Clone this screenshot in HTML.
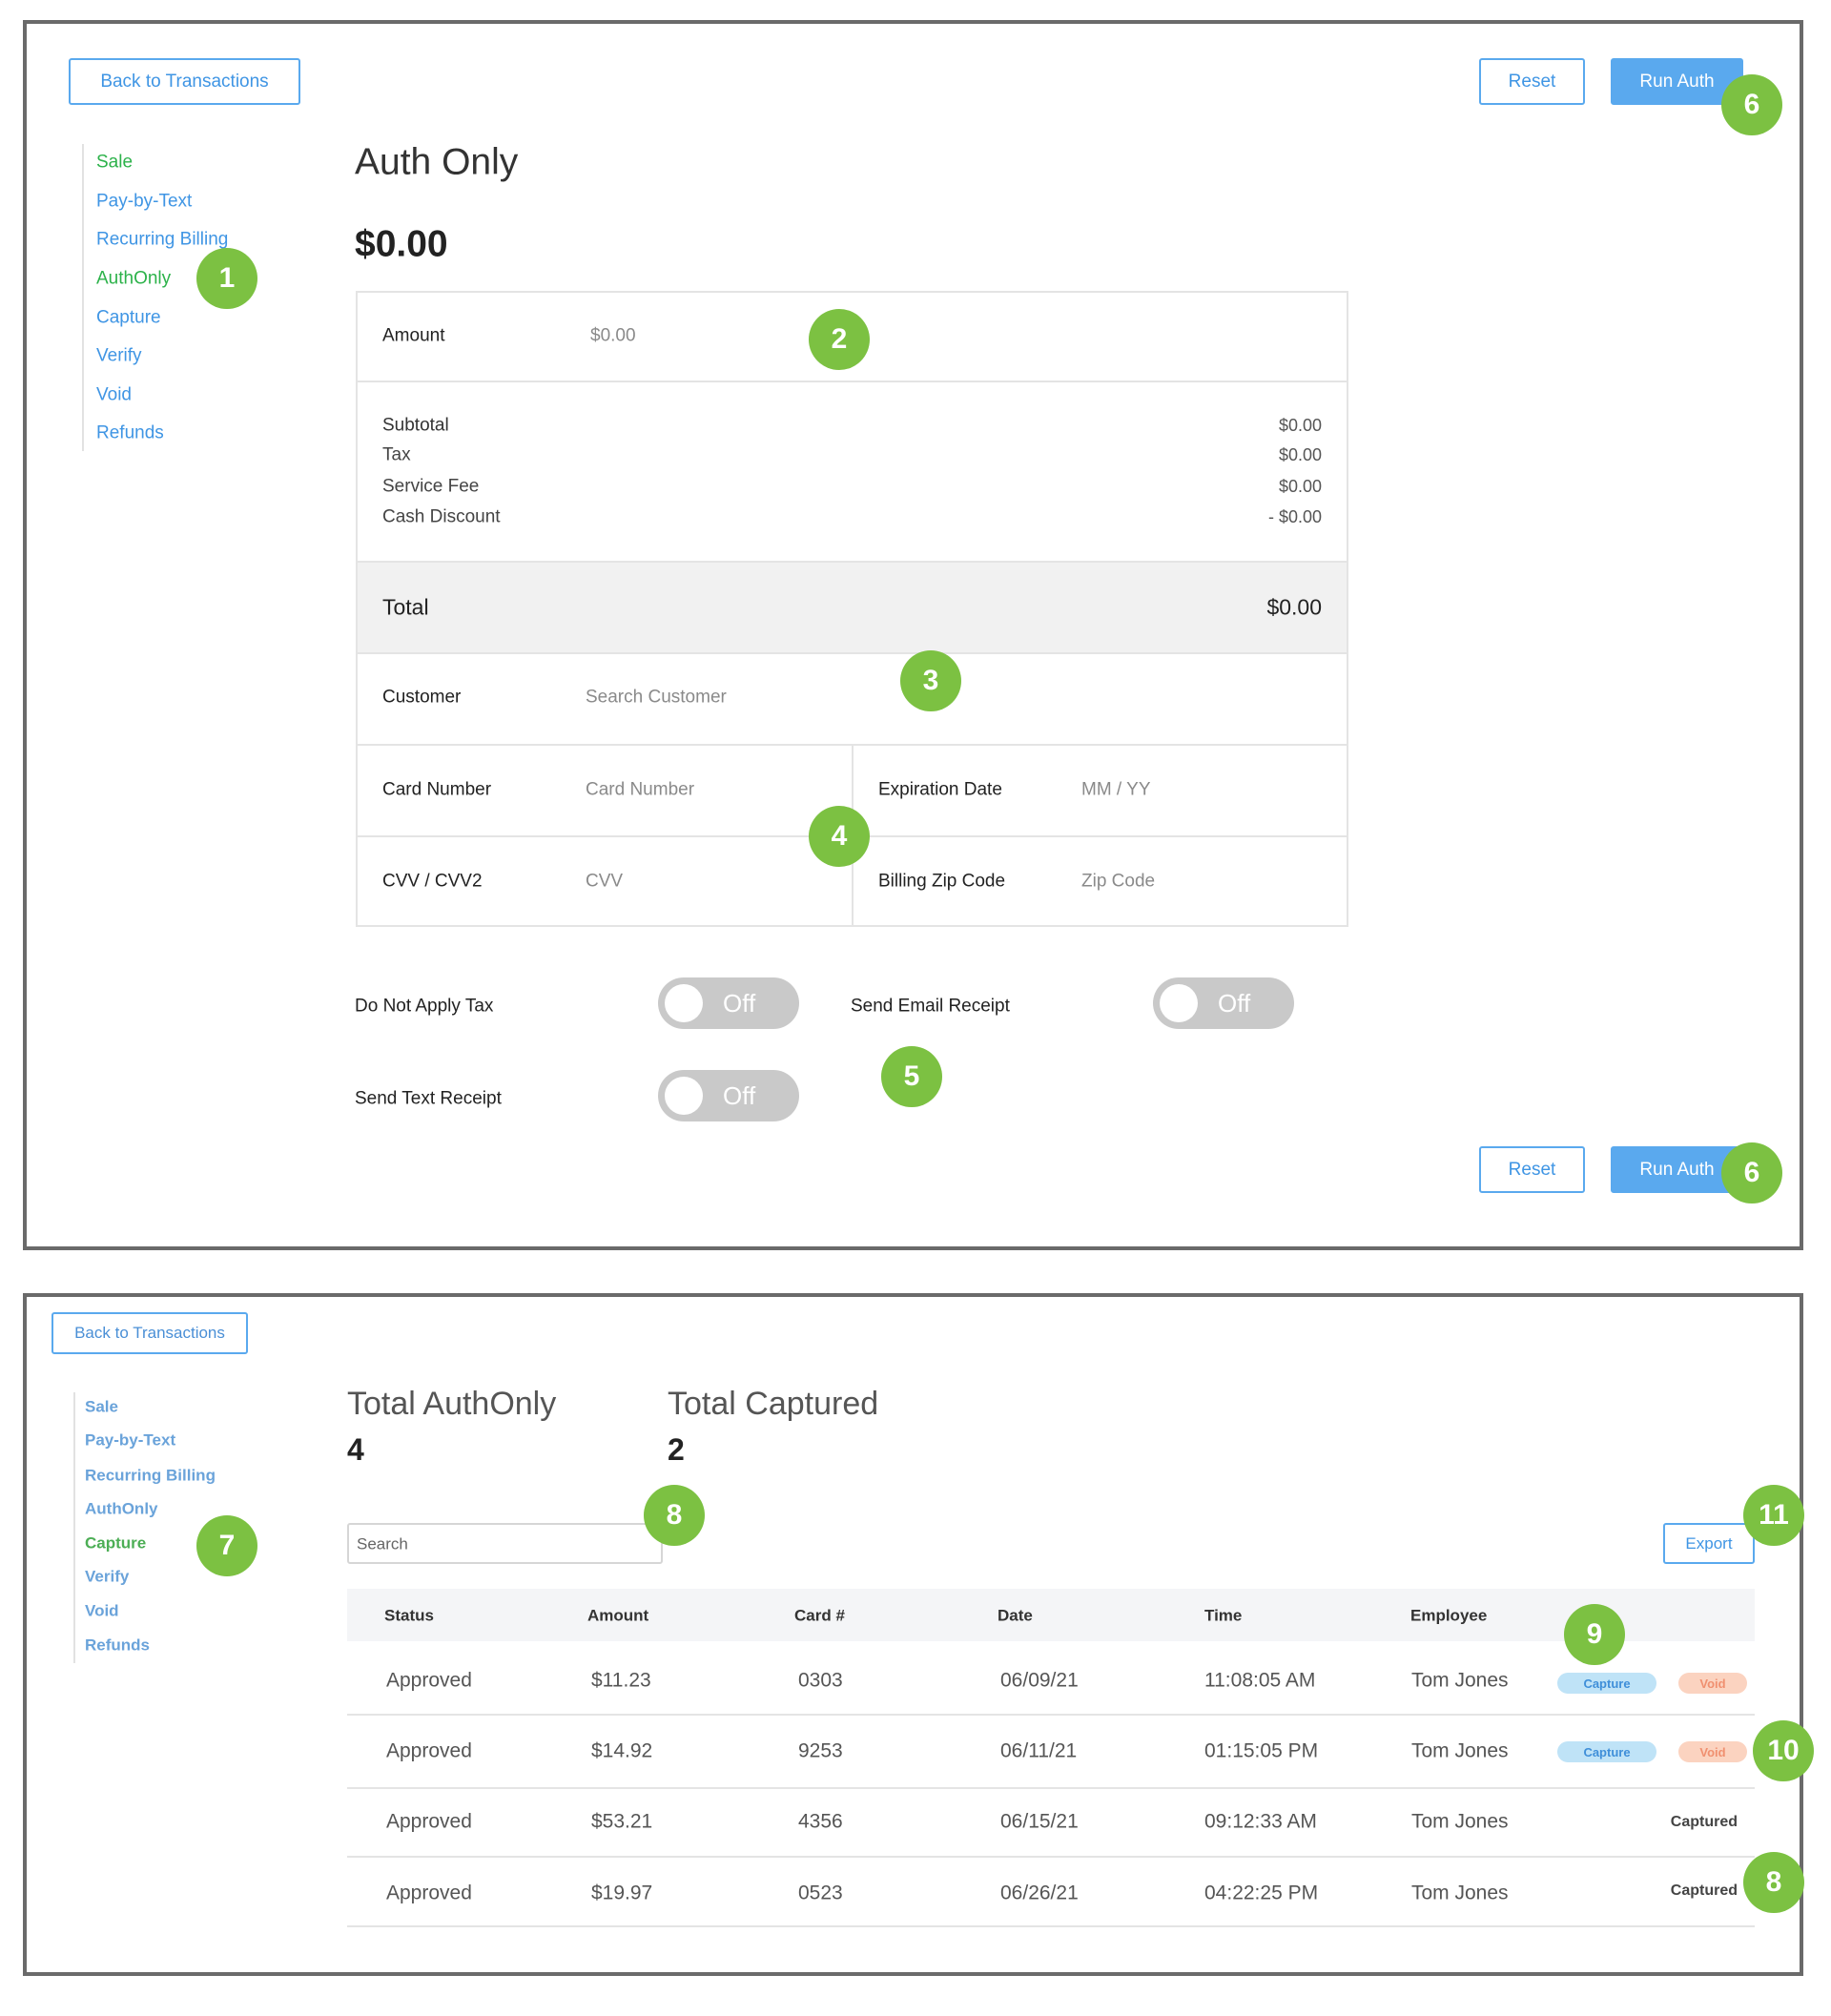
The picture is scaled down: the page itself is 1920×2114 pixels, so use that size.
<!DOCTYPE html>
<html><head><meta charset="utf-8"><style>
body{margin:0;width:1920px;height:2114px;background:#fff;position:relative;overflow:hidden;font-family:"Liberation Sans",Arial,sans-serif}
.a{position:absolute}
.t{position:absolute;white-space:nowrap;transform:translateY(-50%);line-height:1}
.frame{position:absolute;border:4px solid #6a6a6a;box-sizing:border-box}
.btn{position:absolute;box-sizing:border-box;border:2px solid #5aa9ee;border-radius:3px;color:#3f95e4;display:flex;align-items:center;justify-content:center;background:#fff}
.run{background:#5aa9ee;color:#fff;border-color:#5aa9ee}
.bd{position:absolute;width:64px;height:64px;border-radius:50%;background:#7cc142;color:#fff;font-weight:bold;font-size:30px;display:flex;align-items:center;justify-content:center;transform:translate(-50%,-50%)}
.nav1{color:#3f95e4;font-size:19px}
.g{color:#2cb24a}
.lab{color:#222;font-size:19px}
.ph{color:#8a8a8a;font-size:19px}
.hl{position:absolute;height:2px;background:#e4e4e4}
.tog{position:absolute;width:148px;height:54px;border-radius:27px;background:#c9c9c9;box-sizing:border-box}
.tog i{position:absolute;left:7px;top:7px;width:40px;height:40px;border-radius:50%;background:#fff}
.tog b{position:absolute;left:68px;top:12px;color:#fff;font-size:26px;font-weight:normal}
.nav2{color:#6aa3da;font-size:17px;font-weight:bold}
.th{font-size:17px;font-weight:bold;color:#333}
.td{font-size:21px;color:#555}
.pc{position:absolute;height:22px;border-radius:11px;background:#bfe3f7;color:#3f8fd9;font-size:13px;font-weight:bold;display:flex;align-items:center;justify-content:center;transform:translateY(-50%)}
.pv{background:#fbd3c0;color:#f09070}
.cap{font-size:16px;font-weight:bold;color:#444}
</style></head><body>

<div class="frame" style="left:24px;top:21px;width:1867px;height:1290px"></div>
<div class="btn" style="left:72px;top:61px;width:243px;height:49px;font-size:19px">Back to Transactions</div>
<div class="btn" style="left:1551px;top:61px;width:111px;height:49px;font-size:19px">Reset</div>
<div class="btn run" style="left:1689px;top:61px;width:139px;height:49px;font-size:19px">Run Auth</div>
<div class="bd" style="left:1837px;top:110px">6</div>

<div class="a" style="left:86px;top:151px;width:2px;height:322px;background:#e2e2e2"></div>
<div class="t nav1 g" style="left:101px;top:170px">Sale</div>
<div class="t nav1" style="left:101px;top:211px">Pay-by-Text</div>
<div class="t nav1" style="left:101px;top:251px">Recurring Billing</div>
<div class="t nav1 g" style="left:101px;top:292px">AuthOnly</div>
<div class="t nav1" style="left:101px;top:333px">Capture</div>
<div class="t nav1" style="left:101px;top:373px">Verify</div>
<div class="t nav1" style="left:101px;top:414px">Void</div>
<div class="t nav1" style="left:101px;top:454px">Refunds</div>
<div class="bd" style="left:238px;top:292px">1</div>

<div class="t" style="left:372px;top:170px;font-size:39px;color:#333">Auth Only</div>
<div class="t" style="left:372px;top:256px;font-size:39px;font-weight:bold;color:#222">$0.00</div>

<div class="a" style="left:373px;top:305px;width:1041px;height:667px;border:2px solid #e4e4e4;box-sizing:border-box"></div>
<div class="a" style="left:375px;top:589px;width:1037px;height:96px;background:#f1f1f1"></div>
<div class="hl" style="left:373px;top:399px;width:1041px"></div>
<div class="hl" style="left:373px;top:588px;width:1041px"></div>
<div class="hl" style="left:373px;top:684px;width:1041px"></div>
<div class="hl" style="left:373px;top:780px;width:1041px"></div>
<div class="hl" style="left:373px;top:876px;width:1041px"></div>
<div class="a" style="left:893px;top:781px;width:2px;height:190px;background:#e4e4e4"></div>

<div class="t lab" style="left:401px;top:352px">Amount</div>
<div class="t ph" style="left:619px;top:352px">$0.00</div>
<div class="bd" style="left:880px;top:356px">2</div>

<div class="t lab" style="left:401px;top:446px;color:#333">Subtotal</div>
<div class="t lab" style="left:401px;top:477px;color:#444">Tax</div>
<div class="t lab" style="left:401px;top:510px;color:#444">Service Fee</div>
<div class="t lab" style="left:401px;top:542px;color:#444">Cash Discount</div>
<div class="t ph" style="right:534px;top:446px;color:#555;font-size:18px">$0.00</div>
<div class="t ph" style="right:534px;top:477px;color:#555;font-size:18px">$0.00</div>
<div class="t ph" style="right:534px;top:510px;color:#555;font-size:18px">$0.00</div>
<div class="t ph" style="right:534px;top:542px;color:#555;font-size:18px">- $0.00</div>

<div class="t" style="left:401px;top:637px;font-size:23px;color:#222">Total</div>
<div class="t" style="right:534px;top:637px;font-size:23px;color:#222">$0.00</div>

<div class="t lab" style="left:401px;top:731px">Customer</div>
<div class="t ph" style="left:614px;top:731px">Search Customer</div>
<div class="bd" style="left:976px;top:714px">3</div>

<div class="t lab" style="left:401px;top:828px">Card Number</div>
<div class="t ph" style="left:614px;top:828px">Card Number</div>
<div class="t lab" style="left:921px;top:828px">Expiration Date</div>
<div class="t ph" style="left:1134px;top:828px">MM / YY</div>
<div class="t lab" style="left:401px;top:924px">CVV / CVV2</div>
<div class="t ph" style="left:614px;top:924px">CVV</div>
<div class="t lab" style="left:921px;top:924px">Billing Zip Code</div>
<div class="t ph" style="left:1134px;top:924px">Zip Code</div>
<div class="bd" style="left:880px;top:877px">4</div>

<div class="t lab" style="left:372px;top:1055px">Do Not Apply Tax</div>
<div class="tog" style="left:690px;top:1025px"><i></i><b>Off</b></div>
<div class="t lab" style="left:892px;top:1055px">Send Email Receipt</div>
<div class="tog" style="left:1209px;top:1025px"><i></i><b>Off</b></div>
<div class="t lab" style="left:372px;top:1152px">Send Text Receipt</div>
<div class="tog" style="left:690px;top:1122px"><i></i><b>Off</b></div>
<div class="bd" style="left:956px;top:1129px">5</div>

<div class="btn" style="left:1551px;top:1202px;width:111px;height:49px;font-size:19px">Reset</div>
<div class="btn run" style="left:1689px;top:1202px;width:139px;height:49px;font-size:19px">Run Auth</div>
<div class="bd" style="left:1837px;top:1230px">6</div>

<!-- frame 2 -->
<div class="frame" style="left:24px;top:1356px;width:1867px;height:716px"></div>
<div class="btn" style="left:54px;top:1376px;width:206px;height:44px;font-size:17px;color:#4a8fd6">Back to Transactions</div>
<div class="a" style="left:77px;top:1460px;width:2px;height:284px;background:#e2e2e2"></div>
<div class="t nav2" style="left:89px;top:1475px">Sale</div>
<div class="t nav2" style="left:89px;top:1510px">Pay-by-Text</div>
<div class="t nav2" style="left:89px;top:1547px">Recurring Billing</div>
<div class="t nav2" style="left:89px;top:1582px">AuthOnly</div>
<div class="t nav2" style="left:89px;top:1618px;color:#4cae55">Capture</div>
<div class="t nav2" style="left:89px;top:1653px">Verify</div>
<div class="t nav2" style="left:89px;top:1689px">Void</div>
<div class="t nav2" style="left:89px;top:1725px">Refunds</div>
<div class="bd" style="left:238px;top:1621px">7</div>

<div class="t" style="left:364px;top:1472px;font-size:34px;color:#555">Total AuthOnly</div>
<div class="t" style="left:364px;top:1520px;font-size:32px;font-weight:bold;color:#222">4</div>
<div class="t" style="left:700px;top:1472px;font-size:34px;color:#555">Total Captured</div>
<div class="t" style="left:700px;top:1520px;font-size:32px;font-weight:bold;color:#222">2</div>

<div class="a" style="left:364px;top:1597px;width:331px;height:43px;border:2px solid #d6d6d6;border-radius:3px;box-sizing:border-box"></div>
<div class="t" style="left:374px;top:1619px;font-size:17px;color:#666">Search</div>
<div class="bd" style="left:707px;top:1589px">8</div>

<div class="btn" style="left:1744px;top:1597px;width:96px;height:43px;font-size:17px">Export</div>
<div class="bd" style="left:1860px;top:1589px">11</div>

<div class="a" style="left:364px;top:1666px;width:1476px;height:55px;background:#f4f5f7"></div>
<div class="t th" style="left:403px;top:1694px">Status</div>
<div class="t th" style="left:616px;top:1694px">Amount</div>
<div class="t th" style="left:833px;top:1694px">Card #</div>
<div class="t th" style="left:1046px;top:1694px">Date</div>
<div class="t th" style="left:1263px;top:1694px">Time</div>
<div class="t th" style="left:1479px;top:1694px">Employee</div>

<div class="hl" style="left:364px;top:1797px;width:1476px"></div>
<div class="hl" style="left:364px;top:1874px;width:1476px"></div>
<div class="hl" style="left:364px;top:1946px;width:1476px"></div>
<div class="hl" style="left:364px;top:2019px;width:1476px"></div>

<div class="t td" style="left:405px;top:1762px">Approved</div><div class="t td" style="left:620px;top:1762px">$11.23</div><div class="t td" style="left:837px;top:1762px">0303</div><div class="t td" style="left:1049px;top:1762px">06/09/21</div><div class="t td" style="left:1263px;top:1762px">11:08:05 AM</div><div class="t td" style="left:1480px;top:1762px">Tom Jones</div>
<div class="pc" style="left:1633px;top:1765px;width:104px">Capture</div><div class="pc pv" style="left:1760px;top:1765px;width:72px">Void</div>

<div class="t td" style="left:405px;top:1836px">Approved</div><div class="t td" style="left:620px;top:1836px">$14.92</div><div class="t td" style="left:837px;top:1836px">9253</div><div class="t td" style="left:1049px;top:1836px">06/11/21</div><div class="t td" style="left:1263px;top:1836px">01:15:05 PM</div><div class="t td" style="left:1480px;top:1836px">Tom Jones</div>
<div class="pc" style="left:1633px;top:1837px;width:104px">Capture</div><div class="pc pv" style="left:1760px;top:1837px;width:72px">Void</div>

<div class="t td" style="left:405px;top:1910px">Approved</div><div class="t td" style="left:620px;top:1910px">$53.21</div><div class="t td" style="left:837px;top:1910px">4356</div><div class="t td" style="left:1049px;top:1910px">06/15/21</div><div class="t td" style="left:1263px;top:1910px">09:12:33 AM</div><div class="t td" style="left:1480px;top:1910px">Tom Jones</div>
<div class="t cap" style="right:98px;top:1911px">Captured</div>

<div class="t td" style="left:405px;top:1985px">Approved</div><div class="t td" style="left:620px;top:1985px">$19.97</div><div class="t td" style="left:837px;top:1985px">0523</div><div class="t td" style="left:1049px;top:1985px">06/26/21</div><div class="t td" style="left:1263px;top:1985px">04:22:25 PM</div><div class="t td" style="left:1480px;top:1985px">Tom Jones</div>
<div class="t cap" style="right:98px;top:1983px">Captured</div>

<div class="bd" style="left:1672px;top:1714px">9</div>
<div class="bd" style="left:1870px;top:1836px">10</div>
<div class="bd" style="left:1860px;top:1974px">8</div>
</body></html>
